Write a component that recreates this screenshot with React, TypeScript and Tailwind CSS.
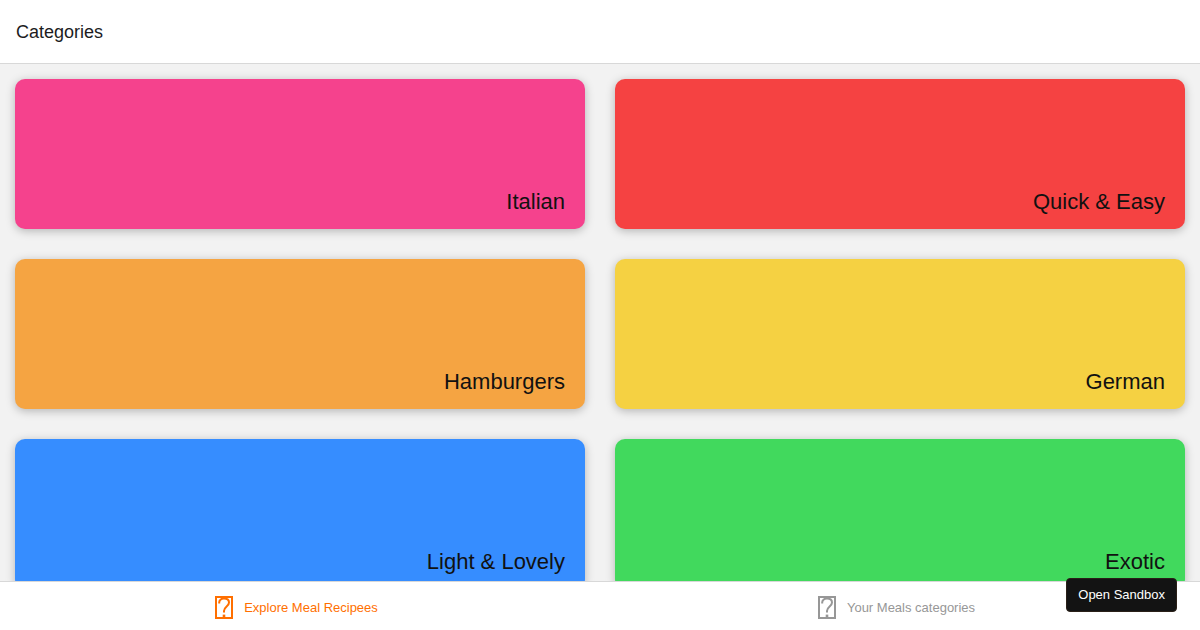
const categories = [
  { title: "Italian", color: "bg-[#f5428d]" },
  { title: "Quick & Easy", color: "bg-[#f54242]" },
  { title: "Hamburgers", color: "bg-[#f5a442]" },
  { title: "German", color: "bg-[#f5d142]" },
  { title: "Light & Lovely", color: "bg-[#368dff]" },
  { title: "Exotic", color: "bg-[#41d95d]" },
];

const tabs = [
  { label: "Explore Meal Recipees", active: true },
  { label: "Your Meals categories", active: false },
];

function MissingGlyph() {
  return (
    <svg viewBox="0 0 20 25" className="h-[25px] w-5 shrink-0" fill="none" stroke="currentColor" aria-hidden="true">
      <rect x="2" y="2" width="16" height="21" strokeWidth="2" />
      <path d="M5.2 8.6V7.6C5.2 5.1 7 3.6 10 3.6s5 1.5 5 3.9c0 1.9-.9 2.8-2.4 4.1-1.7 1.5-2.6 2.4-2.6 4.5v1.3" strokeWidth="2" />
      <path d="M10 19.6v2.6" strokeWidth="2.6" />
    </svg>
  );
}

export default function App() {
  return (
    <div className="flex h-screen flex-col bg-[#f2f2f2] font-['Liberation_Sans',Arial,sans-serif]">
      <header className="flex h-16 shrink-0 items-center border-b border-[#d8d8d8] bg-white px-4">
        <h1 className="text-lg text-[#1c1c1e]">Categories</h1>
      </header>

      <main className="min-h-0 flex-1 overflow-y-auto [scrollbar-width:none]">
        <div className="grid grid-cols-2 gap-[30px] p-[15px]">
          {categories.map(({ title, color }) => (
            <button
              key={title}
              type="button"
              className={`flex h-[150px] items-end justify-end rounded-[10px] px-5 py-[15px] text-right text-[22px] leading-[25px] text-[#111111] shadow-[0_2px_10px_rgba(0,0,0,0.26)] ${color}`}
            >
              {title}
            </button>
          ))}
        </div>
      </main>

      <nav className="relative z-10 grid h-[49px] shrink-0 grid-cols-2 border-t border-[#d8d8d8] bg-white">
        {tabs.map(({ label, active }) => (
          <a
            key={label}
            href="#"
            aria-current={active ? "page" : undefined}
            className={`flex items-center justify-center gap-[10px] pt-[3px] pr-2 text-[13px] ${active ? "text-[#ff6f00]" : "text-[#979797]"}`}
          >
            <MissingGlyph />
            <span>{label}</span>
          </a>
        ))}
      </nav>

      <button
        type="button"
        className="fixed right-[23px] bottom-[18px] z-20 h-[34px] rounded border border-[#2a2018] bg-[#131313] px-[11px] text-[13px] text-white"
      >
        Open Sandbox
      </button>
    </div>
  );
}
